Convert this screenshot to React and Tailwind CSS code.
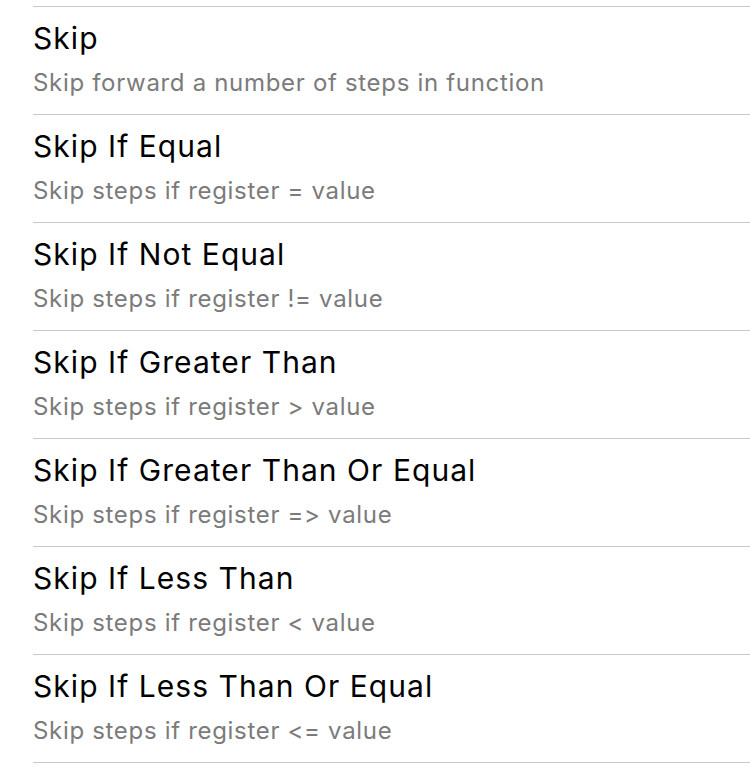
export default function App() {
  const rows = [
    ["Skip", "Skip forward a number of steps in function"],
    ["Skip If Equal", "Skip steps if register = value"],
    ["Skip If Not Equal", "Skip steps if register != value"],
    ["Skip If Greater Than", "Skip steps if register > value"],
    ["Skip If Greater Than Or Equal", "Skip steps if register => value"],
    ["Skip If Less Than", "Skip steps if register < value"],
    ["Skip If Less Than Or Equal", "Skip steps if register <= value"],
  ];
  return (
    <div className="w-[750px] h-[771px] bg-white overflow-hidden pt-[6px] pl-[33px]" style={{ fontFamily: "Inter, 'Noto Sans', sans-serif" }}>
      {rows.map(([t, s], i) => (
        <div key={i} className="border-t border-[#c8c7cc] h-[108px] flex flex-col pt-[13px]">
          <div className="text-[30px] leading-[36px] text-black tracking-[1.05px]">{t}</div>
          <div className="mt-[12px] text-[24px] leading-[30px] text-[#7b7b7b] tracking-[0.68px]">{s}</div>
        </div>
      ))}
      <div className="border-t border-[#c8c7cc]" />
    </div>
  );
}
